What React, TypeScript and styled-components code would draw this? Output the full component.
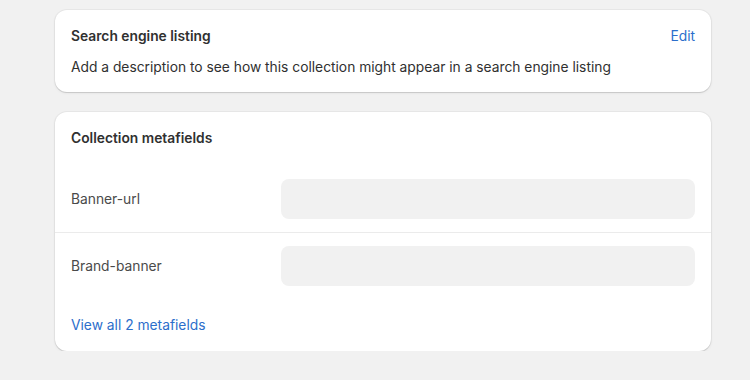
import React from "react";
import styled, { createGlobalStyle } from "styled-components";

const Global = createGlobalStyle`
  html, body { margin: 0; padding: 0; background: #f1f1f1; }
  body { font-family: Inter, "Noto Sans", sans-serif; font-size: 13.8px; line-height: 20px; color: #303030; -webkit-font-smoothing: antialiased; }
`;

const Page = styled.div`
  padding: 10px 0 0 55px;
  display: flex;
  flex-direction: column;
  gap: 20px;
  width: 656px;
`;

const Card = styled.section`
  background: #fff;
  border-radius: 12px;
  box-shadow: 0 1px 0 0 rgba(26, 26, 26, 0.1), 0 0 0 1px rgba(26, 26, 26, 0.04), 0 1px 3px rgba(26, 26, 26, 0.08);
  overflow: hidden;
`;

const CardSection = styled.div<{ $pb?: number }>`
  padding: 16px 16px ${(p) => p.$pb ?? 15}px;
  display: flex;
  flex-direction: column;
  gap: 11px;
`;

const HeaderRow = styled.div`
  display: flex;
  justify-content: space-between;
  align-items: center;
`;

const Title = styled.h2`
  margin: 0;
  font-size: 13.8px;
  line-height: 20px;
  font-weight: 600;
  color: #303030;
`;

const Text = styled.p`
  margin: 0;
  color: #303030;
`;

const Link = styled.a`
  color: #2c6ecb;
  text-decoration: none;
  cursor: pointer;
`;

const Row = styled.div<{ $divider?: boolean }>`
  display: grid;
  grid-template-columns: 210px 1fr;
  align-items: center;
  padding: ${(p) => (p.$divider ? "13px" : "14px")} 16px 13px;
  border-top: ${(p) => (p.$divider ? "1px solid #ebebeb" : "none")};
`;

const Label = styled.span`
  color: #4a4a4a;
`;

const Field = styled.div`
  height: 40px;
  background: #f1f1f1;
  border-radius: 8px;
`;

const Footer = styled.div`
  padding: 16px 16px 16px;
`;

export default function App() {
  return (
    <>
      <Global />
      <Page>
        <Card>
          <CardSection>
            <HeaderRow>
              <Title>Search engine listing</Title>
              <Link>Edit</Link>
            </HeaderRow>
            <Text>Add a description to see how this collection might appear in a search engine listing</Text>
          </CardSection>
        </Card>
        <Card>
          <CardSection $pb={17}>
            <Title>Collection metafields</Title>
          </CardSection>
          <Row>
            <Label>Banner-url</Label>
            <Field />
          </Row>
          <Row $divider>
            <Label>Brand-banner</Label>
            <Field />
          </Row>
          <Footer>
            <Link>View all 2 metafields</Link>
          </Footer>
        </Card>
      </Page>
    </>
  );
}
